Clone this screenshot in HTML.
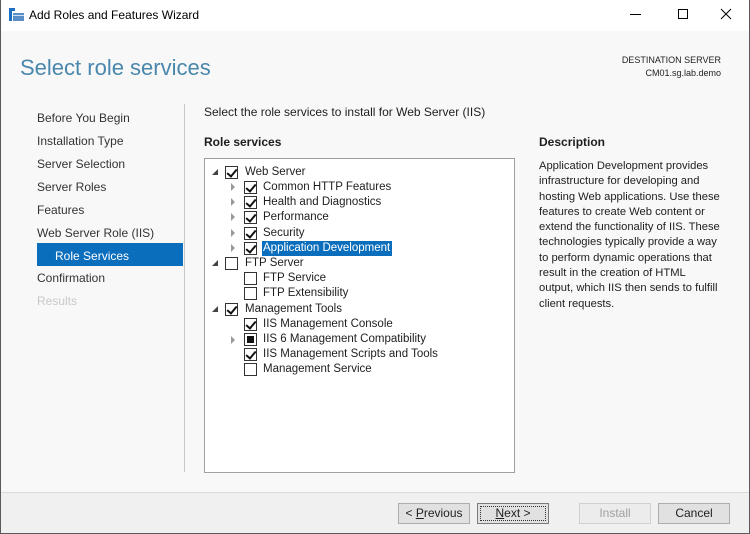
<!DOCTYPE html>
<html><head><style>
*{margin:0;padding:0;box-sizing:border-box}
body{width:750px;height:534px;overflow:hidden;font-family:"Liberation Sans",sans-serif;font-size:11.5px;color:#1e1e1e;background:#f8f8f8;position:relative}
.abs{position:absolute;white-space:nowrap}
#win{position:absolute;left:0;top:0;width:750px;height:534px;border:1px solid #5a5a5a;border-top:none}
.nav{position:absolute;left:37px;font-size:12px;color:#333;line-height:16px}
.row{position:absolute;height:15px;line-height:15px;font-size:11.5px;margin-top:1px}
.cb{position:absolute;width:13px;height:13px;border:1px solid #333;background:#fff;margin-top:1px}
.cb.c::after{content:"";position:absolute;left:3px;top:0px;width:4px;height:8px;border:solid #111;border-width:0 2px 2px 0;transform:rotate(40deg)}
.cb.p::after{content:"";position:absolute;left:2px;top:2px;width:7px;height:7px;background:#111}
.btn{position:absolute;top:503px;height:21px;border:1px solid #adadad;background:#e1e1e1;text-align:center;line-height:19px;font-size:12px}
</style></head><body>
<div style="position:absolute;left:0;top:0;width:750px;height:31px;background:#fff"></div>
<svg class="abs" style="left:9px;top:8px" width="16" height="14"><rect x="0" y="0" width="6" height="3" fill="#1e6fc4"/><rect x="0" y="3" width="3" height="10" fill="#1e6fc4"/><rect x="4" y="5" width="11" height="8" fill="#5a8ec6"/><rect x="4" y="7" width="11" height="1" fill="#cfe0f2"/></svg>
<div class="abs" style="left:29px;top:8px;font-size:12px;color:#000">Add Roles and Features Wizard</div>
<div class="abs" style="left:630px;top:14px;width:11px;height:1px;background:#000"></div>
<div class="abs" style="left:678px;top:9px;width:10px;height:10px;border:1px solid #000"></div>
<svg class="abs" style="left:720px;top:8px" width="12" height="12"><path d="M1 1L11 11M11 1L1 11" stroke="#000" stroke-width="1"/></svg>
<div class="abs" style="left:20px;top:55px;font-size:22px;color:#4a87ad">Select role services</div>
<div class="abs" style="right:29px;top:54px;font-size:9px;color:#222;text-align:right;line-height:13px">DESTINATION SERVER<br>CM01.sg.lab.demo</div>
<div class="nav" style="top:110px">Before You Begin</div>
<div class="nav" style="top:133px">Installation Type</div>
<div class="nav" style="top:156px">Server Selection</div>
<div class="nav" style="top:179px">Server Roles</div>
<div class="nav" style="top:202px">Features</div>
<div class="nav" style="top:225px">Web Server Role (IIS)</div>
<div class="abs" style="left:37px;top:243px;width:146px;height:23px;background:#0b6ebd"></div>
<div class="nav" style="left:55px;top:248px;color:#fff">Role Services</div>
<div class="nav" style="top:270px">Confirmation</div>
<div class="nav" style="top:293px;color:#c8c8c8">Results</div>
<div class="abs" style="left:184px;top:104px;width:1px;height:368px;background:#c8c8c8"></div>
<div class="abs" style="left:204px;top:105px;font-size:12px">Select the role services to install for Web Server (IIS)</div>
<div class="abs" style="left:204px;top:135px;font-size:12px;font-weight:bold">Role services</div>
<div class="abs" style="left:539px;top:135px;font-size:12px;font-weight:bold">Description</div>
<div class="abs" style="left:539px;top:159px;font-size:11.2px;line-height:15.3px">Application Development provides<br>infrastructure for developing and<br>hosting Web applications. Use these<br>features to create Web content or<br>extend the functionality of IIS. These<br>technologies typically provide a way<br>to perform dynamic operations that<br>result in the creation of HTML<br>output, which IIS then sends to fulfill<br>client requests.</div>
<div class="abs" style="left:204px;top:158px;width:311px;height:315px;background:#fff;border:1px solid #a0a0a0"></div>

<div class="abs" style="left:212px;top:169px;width:0;height:0;border-left:6px solid transparent;border-bottom:6px solid #444"></div>
<div class="cb c" style="left:225px;top:165px"></div><div class="row abs" style="left:245px;top:164px">Web Server</div>
<div class="abs" style="left:231px;top:183px;border-top:4px solid transparent;border-bottom:4px solid transparent;border-left:4px solid #999"></div>
<div class="cb c" style="left:244px;top:180px"></div><div class="row abs" style="left:263px;top:179px">Common HTTP Features</div>
<div class="abs" style="left:231px;top:198px;border-top:4px solid transparent;border-bottom:4px solid transparent;border-left:4px solid #999"></div>
<div class="cb c" style="left:244px;top:195px"></div><div class="row abs" style="left:263px;top:194px">Health and Diagnostics</div>
<div class="abs" style="left:231px;top:213px;border-top:4px solid transparent;border-bottom:4px solid transparent;border-left:4px solid #999"></div>
<div class="cb c" style="left:244px;top:210px"></div><div class="row abs" style="left:263px;top:209px">Performance</div>
<div class="abs" style="left:231px;top:229px;border-top:4px solid transparent;border-bottom:4px solid transparent;border-left:4px solid #999"></div>
<div class="cb c" style="left:244px;top:226px"></div><div class="row abs" style="left:263px;top:225px">Security</div>
<div class="abs" style="left:231px;top:244px;border-top:4px solid transparent;border-bottom:4px solid transparent;border-left:4px solid #999"></div>
<div class="cb c" style="left:244px;top:241px"></div><div class="row abs" style="left:262px;top:240px;background:#0b6ebd;color:#fff;padding:0 1px;width:130px">Application Development</div>
<div class="abs" style="left:212px;top:260px;border-left:6px solid transparent;border-bottom:6px solid #444"></div>
<div class="cb" style="left:225px;top:256px"></div><div class="row abs" style="left:245px;top:255px">FTP Server</div>
<div class="cb" style="left:244px;top:271px"></div><div class="row abs" style="left:263px;top:270px">FTP Service</div>
<div class="cb" style="left:244px;top:286px"></div><div class="row abs" style="left:263px;top:285px">FTP Extensibility</div>
<div class="abs" style="left:212px;top:306px;border-left:6px solid transparent;border-bottom:6px solid #444"></div>
<div class="cb c" style="left:225px;top:302px"></div><div class="row abs" style="left:245px;top:301px">Management Tools</div>
<div class="cb c" style="left:244px;top:317px"></div><div class="row abs" style="left:263px;top:316px">IIS Management Console</div>
<div class="abs" style="left:231px;top:336px;border-top:4px solid transparent;border-bottom:4px solid transparent;border-left:4px solid #999"></div>
<div class="cb p" style="left:244px;top:332px"></div><div class="row abs" style="left:263px;top:331px">IIS 6 Management Compatibility</div>
<div class="cb c" style="left:244px;top:347px"></div><div class="row abs" style="left:263px;top:346px">IIS Management Scripts and Tools</div>
<div class="cb" style="left:244px;top:362px"></div><div class="row abs" style="left:263px;top:361px">Management Service</div>

<div class="abs" style="left:1px;top:492px;width:748px;height:41px;background:#f0f0f0;border-top:1px solid #dadada"></div>
<div class="btn" style="left:398px;width:72px">&lt; <u>P</u>revious</div>
<div class="btn" style="left:477px;width:72px;border:1px solid #7a7a7a;outline:1px dotted #333;outline-offset:-4px"><u>N</u>ext &gt;</div>
<div class="btn" style="left:579px;width:72px;background:#ececec;border-color:#d0d0d0;color:#a0a0a0">Install</div>
<div class="btn" style="left:658px;width:72px">Cancel</div>
<div id="win"></div>
</body></html>
